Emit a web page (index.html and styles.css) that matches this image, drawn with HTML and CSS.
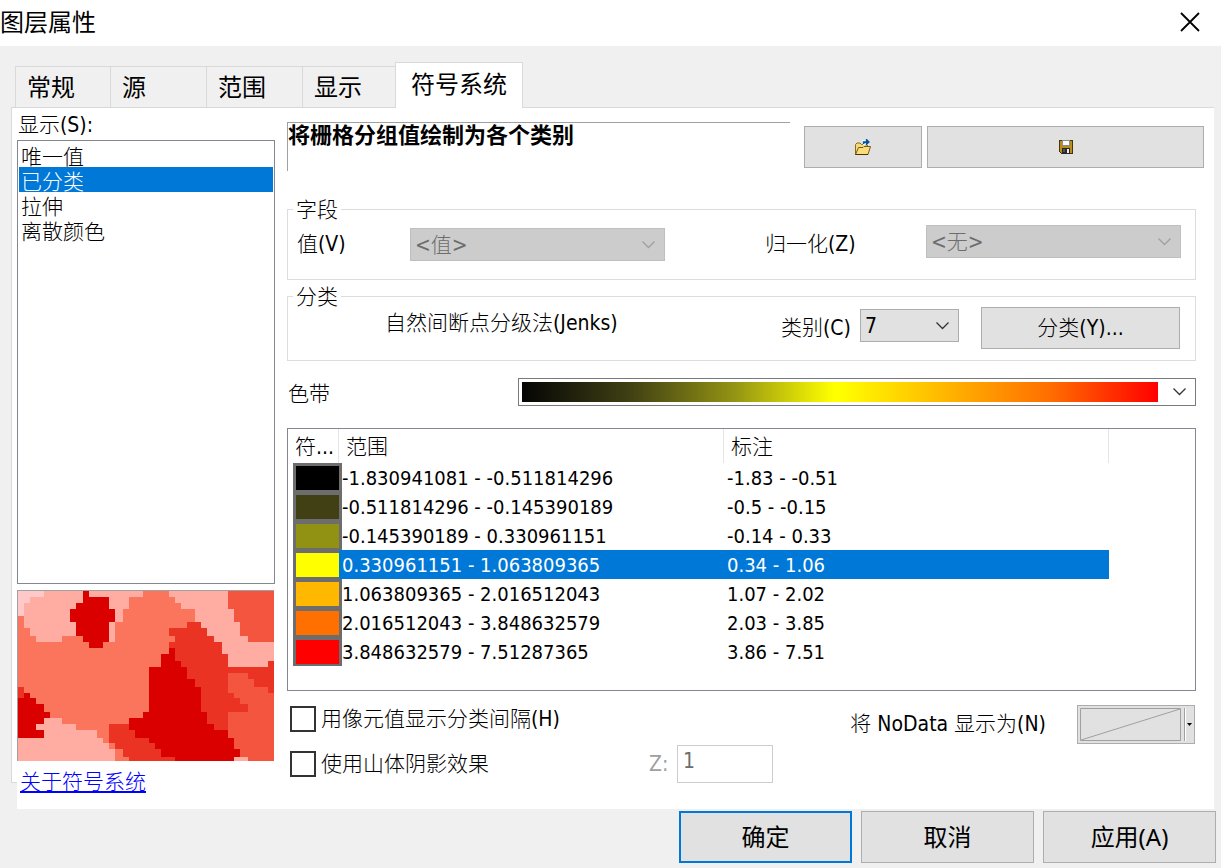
FILE: index.html
```html
<!DOCTYPE html>
<html lang="zh-CN">
<head>
<meta charset="utf-8">
<title>图层属性</title>
<link rel="stylesheet" href="styles.css">
</head>
<body>
<header class="titlebar">
  <h1 class="title">图层属性</h1>
  <button class="close" type="button" aria-label="关闭">
    <svg width="20" height="20" viewBox="0 0 20 20"><path d="M1 1L19 19M19 1L1 19" fill="none" stroke="#000" stroke-width="1.8"/></svg>
  </button>
</header>

<nav class="tabs" role="tablist">
  <button class="tab tab-first" type="button" role="tab">常规</button>
  <button class="tab" type="button" role="tab">源</button>
  <button class="tab" type="button" role="tab">范围</button>
  <button class="tab tab-last" type="button" role="tab">显示</button>
  <button class="tab tab-active" type="button" role="tab" aria-selected="true">符号系统</button>
</nav>

<main class="panel">
  <div class="edge"></div>
  <div class="page">
    <section class="side">
      <label class="side-label" for="renderers">显示(S):</label>
      <select class="renderers" id="renderers" size="4">
        <option>唯一值</option>
        <option selected>已分类</option>
        <option>拉伸</option>
        <option>离散颜色</option>
      </select>
      <svg class="preview" viewBox="27 30 771 513" preserveAspectRatio="none" shape-rendering="crispEdges">
        <path fill="#fb755c" d="M27 30H798V543H27Z"/>
        <path fill="#ffaca3" d="M30 33H405V51H363V87H345V126H321V186H303V168H162V186H84V168H66V144H48V108H30Z"/>
        <path fill="#ffc9c9" d="M30 33H108V51H66V69H48V108H30Z"/>
        <path fill="#db0000" d="M225 33H243V51H303V87H321V126H303V186H285V204H243V186H225V168H204V126H186V87H204V69H225Z"/>
        <path fill="#ffaca3" d="M483 33H660V87H678V126H696V168H720V186H798V243H780V261H660V222H642V186H618V168H597V144H579V126H561V87H519V69H501V51H483Z"/>
        <path fill="#f3553e" d="M660 33H798V186H720V168H696V126H678V87H660Z"/>
        <path fill="#ea3322" d="M537 126H579V144H597V168H618V186H642V222H660V261H780V243H798V543H363V531H345V507H321V489H303V432H483V186H501V168H483V144H537Z"/>
        <path fill="#f3553e" d="M660 279H720V297H738V321H780V339H798V543H660V396H720V372H696V354H678V339H660Z"/>
        <path fill="#db0000" d="M483 204H501V243H519V261H537V297H561V321H579V396H597V432H618V450H660V474H678V507H696V531H678V543H501V531H459V507H441V489H423V474H381V450H363V414H405V396H423V261H459V222H483Z"/>
        <path fill="#ffaca3" d="M678 531H720V543H678Z"/>
        <path fill="#ea3322" d="M30 321H48V354H30Z"/>
        <path fill="#db0000" d="M48 339H66V354H84V372H108V396H126V414H108V432H84V450H108V474H30V354H48Z"/>
        <path fill="#ffaca3" d="M108 414H162V432H204V450H267V474H285V489H303V507H321V543H30V474H108V450H84V432H108Z"/>
        <path fill="#a0a0a0" d="M27 30H798V33H30V543H27Z"/>
      </svg>
      <a class="about" href="#about">关于符号系统</a>
    </section>

    <section class="content">
      <div class="intro">
        <p class="description">将栅格分组值绘制为各个类别</p>
        <button class="btn import" type="button" aria-label="导入">
          <svg width="18" height="17" viewBox="0 0 18 17">
            <path d="M1.5 15.5V5.5L3 4H6L7.500 5.500H13.500V8" fill="#f3d980" stroke="#8a6a14"/>
            <path d="M1.500 15.500L4.500 8.500H9L10 7.500H16.500L14 15.500Z" fill="#f9dc7c" stroke="#7c5a08"/>
            <path d="M1.500 15.500H14" stroke="#4a3500"/>
            <path d="M8 1H15V6H9Z" fill="#e8f6fb"/>
            <path d="M9.500 5V3H13M12.500 0.500L15 3L12.500 5.500Z" fill="#07509b" stroke="#07509b" stroke-width="1.300"/>
          </svg>
        </button>
        <button class="btn save" type="button" aria-label="保存">
          <svg width="14" height="14" viewBox="0 0 14 14" shape-rendering="crispEdges">
            <path d="M0 0H14V14H2L0 12Z" fill="#47350b"/>
            <path d="M1 1H13V13H2L1 12Z" fill="#b98d20"/>
            <path d="M3 0H11V6H3Z" fill="#8c8c8c"/><path d="M4 1H10V5H4Z" fill="#fff"/>
            <path d="M3 8H11V14H3Z" fill="#292929"/><path d="M8 9H10V13H8Z" fill="#eee"/><path d="M4 9H6V12H4Z" fill="#555"/>
          </svg>
        </button>
      </div>

      <fieldset class="group fields">
        <legend>字段</legend>
        <div class="fields-row">
          <label class="value-label" for="value">值(V)</label>
          <div class="combo value-combo">
            <select id="value" disabled><option>&lt;值&gt;</option></select>
            <svg class="chevron" viewBox="0 0 13 8"><path d="M0.500 0.500L6.500 6.500L12.500 0.500"/></svg>
          </div>
          <label class="norm-label" for="norm">归一化(Z)</label>
          <div class="combo">
            <select id="norm" disabled><option>&lt;无&gt;</option></select>
            <svg class="chevron" viewBox="0 0 13 8"><path d="M0.500 0.500L6.500 6.500L12.500 0.500"/></svg>
          </div>
        </div>
      </fieldset>

      <fieldset class="group classes">
        <legend>分类</legend>
        <div class="classes-row">
          <span class="method">自然间断点分级法(Jenks)</span>
          <label class="count-label" for="count">类别(C)</label>
          <div class="combo count-combo">
            <select id="count"><option>7</option></select>
            <svg class="chevron" viewBox="0 0 13 8"><path d="M0.500 0.500L6.500 6.500L12.500 0.500"/></svg>
          </div>
          <button class="btn classify" type="button">分类(Y)...</button>
        </div>
      </fieldset>

      <div class="ramp-row">
        <label class="ramp-label" for="ramp">色带</label>
        <div class="combo ramp-combo">
          <select id="ramp"><option aria-label="黑色至红色"></option></select>
          <span class="ramp"></span>
          <svg class="chevron" viewBox="0 0 13 8"><path d="M0.500 0.500L6.500 6.500L12.500 0.500"/></svg>
        </div>
      </div>

      <div class="list">
        <table class="breaks">
          <colgroup><col class="col-symbol"><col class="col-text"><col class="col-text"></colgroup>
          <thead><tr><th>符...</th><th>范围</th><th>标注</th></tr></thead>
          <tbody>
            <tr><td><span class="swatch c1"></span></td><td>-1.830941081 - -0.511814296</td><td>-1.83 - -0.51</td></tr>
            <tr><td><span class="swatch c2"></span></td><td>-0.511814296 - -0.145390189</td><td>-0.5 - -0.15</td></tr>
            <tr><td><span class="swatch c3"></span></td><td>-0.145390189 - 0.330961151</td><td>-0.14 - 0.33</td></tr>
            <tr class="selected"><td><span class="swatch c4"></span></td><td>0.330961151 - 1.063809365</td><td>0.34 - 1.06</td></tr>
            <tr><td><span class="swatch c5"></span></td><td>1.063809365 - 2.016512043</td><td>1.07 - 2.02</td></tr>
            <tr><td><span class="swatch c6"></span></td><td>2.016512043 - 3.848632579</td><td>2.03 - 3.85</td></tr>
            <tr><td><span class="swatch c7"></span></td><td>3.848632579 - 7.51287365</td><td>3.86 - 7.51</td></tr>
          </tbody>
        </table>
      </div>

      <div class="options">
        <div class="checks">
          <label class="check"><input type="checkbox">用像元值显示分类间隔(H)</label>
          <div class="check-row">
            <label class="check"><input type="checkbox">使用山体阴影效果</label>
            <label class="z-label" for="z">Z:</label>
            <input class="z" id="z" type="text" value="1" disabled>
          </div>
        </div>
        <div class="nodata">
          <label for="nodata">将 NoData 显示为(N)</label>
          <button class="color" id="nodata" type="button">
            <svg width="101" height="33" viewBox="0 0 101 33"><path d="M0.500 0.500H100.500V32.500H0.500Z" fill="#e1e1e1" stroke="#a0a0a0"/><path d="M1 32L100 1" stroke="#a0a0a0"/></svg>
            <span class="arrow"><svg width="5" height="3" viewBox="0 0 5 3"><path d="M0 0H5L2.500 3Z"/></svg></span>
          </button>
        </div>
      </div>
    </section>
  </div>
</main>

<footer class="actions">
  <button class="btn action primary" type="button">确定</button>
  <button class="btn action" type="button">取消</button>
  <button class="btn action" type="button">应用(A)</button>
</footer>
</body>
</html>
```
FILE: styles.css
```css
* { box-sizing: border-box; }

body {
  margin: 0;
  min-height: 100vh;
  display: flex;
  flex-direction: column;
  background: #f0f0f0;
  color: #000;
  font: 300 21px/24px "DejaVu Sans Condensed", "Noto Sans CJK SC", sans-serif;
}

button, select, input { font: inherit; color: inherit; margin: 0; }

.titlebar {
  height: 46px;
  display: flex;
  justify-content: space-between;
  align-items: center;
  background: #fff;
  padding-right: 21px;
}
.title { margin: 0; font-size: 24px; font-weight: 400; }
.close { border: 0; padding: 0; background: none; display: flex; margin-bottom: 2px; }

.tabs {
  display: flex;
  align-items: flex-end;
  padding: 16px 0 0 15px;
  margin-bottom: -1px;
  position: relative;
}
.tab {
  width: 96px;
  height: 42px;
  padding: 2px 0 0 11px;
  border: 1px solid #d9d9d9;
  border-right: 0;
  background: #f0f0f0;
  font-size: 24px;
  font-weight: 400;
  text-align: left;
}
.tab-first { width: 95px; }
.tab-last { width: 93px; }
.tab-active {
  width: 128px;
  height: 46px;
  padding: 0 0 2px 15px;
  border-right: 1px solid #d9d9d9;
  border-bottom: 0;
  background: #fff;
}

.panel { flex: 1; display: flex; margin: 0 7px 0 11px; }
.edge {
  width: 6px;
  margin-bottom: 26px;
  background: #fff;
  border: 1px solid #d9d9d9;
  border-right: 0;
}
.page {
  flex: 1;
  display: flex;
  gap: 12px;
  border-top: 1px solid #d9d9d9;
  background: #fff;
}

.side { width: 258px; display: flex; flex-direction: column; }
.side-label { height: 32px; padding-left: 1px; line-height: 34px; }
.renderers {
  flex: 1;
  min-height: 200px;
  padding: 1px;
  border: 1px solid #828790;
  border-radius: 0;
  background: #fff;
  overflow: hidden;
  outline: 0;
}
.renderers option {
  display: flex;
  align-items: center;
  height: 25px;
  min-height: 25px;
  padding: 0 2px;
  font-weight: 300;
  color: #000;
}
.renderers option:checked { background: #0078d7 linear-gradient(#0078d7, #0078d7); color: #fff; }
.preview { display: block; width: 257px; height: 171px; margin-top: 6px; }
.about { align-self: flex-start; height: 48px; padding-left: 3px; line-height: 42px; color: #00f; }

.content { flex: 1; min-width: 0; padding: 14px 18px 0 0; }
.intro { display: flex; height: 49px; margin-right: -8px; }
.description {
  flex: 1;
  margin: 0 14px 0 0;
  padding: 1px 0 0;
  border: solid #a0a0a0;
  border-width: 1px 0 0 1px;
  font-size: 22px;
  font-weight: 700;
}
.btn {
  height: 42px;
  padding: 0;
  border: 1px solid #adadad;
  background: #e1e1e1;
  text-align: center;
}
.import, .save { margin-top: 4px; display: flex; align-items: center; justify-content: center; }
.import { width: 118px; margin-right: 5px; }
.save { width: 277px; }

.group { margin: 0; min-width: 0; padding: 0 14px 0 9px; border: 1px solid #dcdcdc; }
.group legend { height: 18px; padding: 0 3px; margin-left: -4px; line-height: 20px; }
.fields { height: 80px; margin-top: 29px; }
.fields-row {
  display: grid;
  grid-template-columns: 113px 255fr 100px 161px 255fr;
  align-items: start;
  padding-top: 7px;
}
.value-label, .norm-label { line-height: 38px; }
.value-combo { margin-top: 3px; }
.norm-label { grid-column: 4; }
.combo { display: grid; align-items: center; }
.combo > * { grid-area: 1 / 1; }
.combo select {
  appearance: none;
  width: 100%;
  height: 33px;
  padding: 0 4px;
  border: 1px solid #adadad;
  border-radius: 0;
  background: #e1e1e1;
}
.combo select:disabled { background: #ccc; border-color: #bfbfbf; color: #6d6d6d; opacity: 1; }
.chevron {
  width: 13px;
  height: 8px;
  margin-right: 10px;
  justify-self: end;
  fill: none;
  stroke: #333;
  stroke-width: 1.3;
  pointer-events: none;
}
.combo select:disabled ~ .chevron { stroke: #a0a0a0; }

.classes { height: 74px; margin-top: 7px; }
.classes-row { display: flex; align-items: flex-start; padding: 2px 1px 0 0; }
.method { flex: 1; padding-left: 88px; line-height: 32px; }
.count-label { width: 79px; line-height: 42px; }
.count-combo { width: 99px; margin: 2px 22px 0 0; }
.classify { width: 199px; }

.ramp-row { display: flex; height: 28px; margin-top: 17px; }
.ramp-label { width: 231px; padding-left: 1px; line-height: 32px; }
.ramp-combo { flex: 1; }
.ramp-combo select { height: 28px; background: #fff; border-color: #7a7a7a; }
.ramp {
  height: 20px;
  margin: 0 38px 0 4px;
  background: linear-gradient(90deg, #050505, #404014 17%, #919114 33%, #ff0 49%, #ff0 50%, #ffb400 67%, #ff6e00 83%, #f00);
  pointer-events: none;
}

.list { min-height: 263px; margin-top: 22px; border: 1px solid #828790; }
.breaks { table-layout: fixed; width: 821px; border-collapse: separate; border-spacing: 0; }
.col-symbol { width: 51px; }
.col-text { width: 385px; }
.breaks th {
  height: 34px;
  padding: 2px 0 0 7px;
  border-right: 1px solid #e5e5e5;
  font-weight: 300;
  text-align: left;
  white-space: nowrap;
}
.breaks td { height: 29px; padding: 0 0 0 3px; font-size: 20px; line-height: 28px; }
.breaks td:first-child { padding: 0 0 0 5px; }
.breaks .selected td + td { background: #0078d7; color: #fff; }
.swatch { display: block; width: 49px; height: 29px; border: 3px solid #6d6d6d; border-bottom-width: 2px; }
.selected .swatch { width: 46px; border-right: 0; }
.c1 { background: #000; }
.c2 { background: #404014; }
.c3 { background: #919114; }
.c4 { background: #ff0; }
.c5 { background: #ffb700; }
.c6 { background: #ff7000; }
.c7 { background: #f00; }

.options { display: flex; justify-content: space-between; padding: 5px 1px 0 3px; }
.checks { width: 483px; }
.check { flex: 1; height: 45px; display: flex; align-items: center; gap: 5px; }
.check input {
  appearance: none;
  width: 26px;
  height: 26px;
  border: 2px solid #333;
  background: #fff;
}
.check-row { display: flex; align-items: center; }
.z-label { width: 28px; color: #a0a0a0; }
.z { width: 96px; height: 38px; padding: 0 5px 5px; border: 1px solid #ccc; border-radius: 0; background: #fff; color: #6d6d6d; }
.nodata { display: flex; align-items: center; gap: 31px; height: 56px; }
.color {
  width: 118px;
  height: 39px;
  padding: 0 0 0 2px;
  display: flex;
  align-items: center;
  gap: 3px;
  border: 1px solid #adadad;
  background: #e1e1e1;
}
.arrow { flex: 1; height: 33px; display: flex; align-items: center; justify-content: center; border-left: 1px solid #a0a0a0; box-shadow: inset 1px 0 #fff; }

.actions { display: flex; justify-content: flex-end; gap: 9px; padding: 2px 5px 5px; font-family: "Noto Sans", "Noto Sans CJK SC", sans-serif; }
.action { width: 173px; height: 52px; font-size: 24px; font-weight: 400; }
.primary { border: 2px solid #0078d7; }
```
